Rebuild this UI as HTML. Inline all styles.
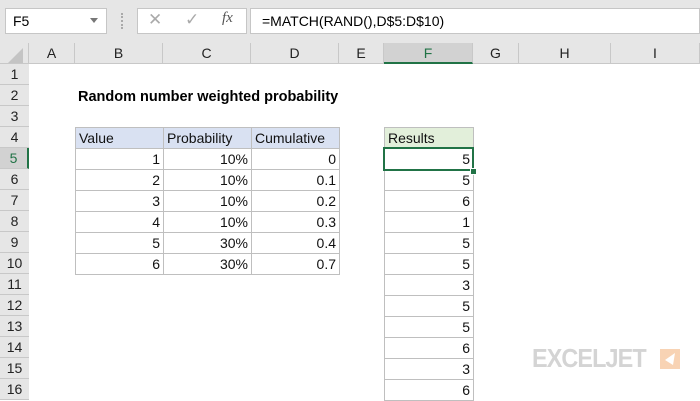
<!DOCTYPE html>
<html><head><style>
body{margin:0;width:700px;height:400px;overflow:hidden;background:#fff;font-family:"Liberation Sans",sans-serif;position:relative}
.a{position:absolute;box-sizing:border-box}
.ch{position:absolute;top:43px;height:21px;border-right:1px solid #c8c8c8;text-align:center;font-size:14px;line-height:21px;color:#222;box-sizing:border-box}
.rh{position:absolute;left:0;width:29px;height:21px;border-bottom:1px solid #c8c8c8;text-align:center;font-size:14px;line-height:21px;color:#222;box-sizing:border-box;background:#e6e6e6}
.c{position:absolute;height:22px;font-size:14px;line-height:21px;padding:0 3px;box-sizing:border-box;border:1px solid #bfbfbf;color:#111}
.r{text-align:right}
</style></head><body>
<div class="a" style="left:0;top:0;width:700px;height:43px;background:#e6e6e6"></div>
<div class="a" style="left:5px;top:8px;width:102px;height:26px;background:#fff;border:1px solid #c6c6c6;font-size:14px;line-height:24px;padding-left:7px">F5</div>
<div class="a" style="left:90px;top:18px;width:0;height:0;border-left:4px solid transparent;border-right:4px solid transparent;border-top:5px solid #777"></div>
<div class="a" style="left:121px;top:13px;width:2px;height:16px;border-left:2px dotted #aaa"></div>
<div class="a" style="left:137px;top:8px;width:110px;height:26px;background:#fff;border:1px solid #c6c6c6"></div>
<div class="a" style="left:148px;top:10px;font-size:17px;color:#aaa">✕</div>
<div class="a" style="left:185px;top:10px;font-size:17px;color:#aaa">✓</div>
<div class="a" style="left:222px;top:10px;font-size:15px;color:#555;font-style:italic;font-family:'Liberation Serif',serif">fx</div>
<div class="a" style="left:250px;top:8px;width:450px;height:26px;background:#fff;border:1px solid #c6c6c6;font-size:14px;line-height:24px;padding-left:11px">=MATCH(RAND(),D$5:D$10)</div>
<div class="a" style="left:0;top:43px;width:700px;height:21px;background:#e6e6e6;border-bottom:1px solid #c8c8c8"></div>
<div class="a" style="left:8px;top:48px;width:0;height:0;border-left:15px solid transparent;border-bottom:15px solid #c4c4c4"></div>
<div class="ch" style="left:0;width:29px"></div>
<div class="ch" style="left:29px;width:46px">A</div>
<div class="ch" style="left:75px;width:88px">B</div>
<div class="ch" style="left:163px;width:88px">C</div>
<div class="ch" style="left:251px;width:88px">D</div>
<div class="ch" style="left:339px;width:45px">E</div>
<div class="ch" style="left:384px;width:89px;background:#d2d2d2;border-bottom:2px solid #217346;color:#217346">F</div>
<div class="ch" style="left:473px;width:46px">G</div>
<div class="ch" style="left:519px;width:92px">H</div>
<div class="ch" style="left:611px;width:89px">I</div>
<div class="a" style="left:28px;top:64px;width:1px;height:336px;background:#c8c8c8"></div>
<div class="rh" style="top:64px">1</div><div class="rh" style="top:85px">2</div><div class="rh" style="top:106px">3</div><div class="rh" style="top:127px">4</div>
<div class="rh" style="top:148px;background:#d2d2d2;color:#217346;border-right:2px solid #217346">5</div>
<div class="rh" style="top:169px">6</div><div class="rh" style="top:190px">7</div><div class="rh" style="top:211px">8</div><div class="rh" style="top:232px">9</div><div class="rh" style="top:253px">10</div><div class="rh" style="top:274px">11</div><div class="rh" style="top:295px">12</div><div class="rh" style="top:316px">13</div><div class="rh" style="top:337px">14</div><div class="rh" style="top:358px">15</div><div class="rh" style="top:379px">16</div>
<div class="a" style="left:78px;top:87px;font-size:14.5px;font-weight:bold;line-height:21px">Random number weighted probability</div>

<div class="c" style="left:75px;top:127px;width:89px;background:#d9e1f2">Value</div>
<div class="c" style="left:163px;top:127px;width:89px;background:#d9e1f2">Probability</div>
<div class="c" style="left:251px;top:127px;width:89px;background:#d9e1f2">Cumulative</div>

<div class="c r" style="left:75px;top:148px;width:89px">1</div><div class="c r" style="left:163px;top:148px;width:89px">10%</div><div class="c r" style="left:251px;top:148px;width:89px">0</div>
<div class="c r" style="left:75px;top:169px;width:89px">2</div><div class="c r" style="left:163px;top:169px;width:89px">10%</div><div class="c r" style="left:251px;top:169px;width:89px">0.1</div>
<div class="c r" style="left:75px;top:190px;width:89px">3</div><div class="c r" style="left:163px;top:190px;width:89px">10%</div><div class="c r" style="left:251px;top:190px;width:89px">0.2</div>
<div class="c r" style="left:75px;top:211px;width:89px">4</div><div class="c r" style="left:163px;top:211px;width:89px">10%</div><div class="c r" style="left:251px;top:211px;width:89px">0.3</div>
<div class="c r" style="left:75px;top:232px;width:89px">5</div><div class="c r" style="left:163px;top:232px;width:89px">30%</div><div class="c r" style="left:251px;top:232px;width:89px">0.4</div>
<div class="c r" style="left:75px;top:253px;width:89px">6</div><div class="c r" style="left:163px;top:253px;width:89px">30%</div><div class="c r" style="left:251px;top:253px;width:89px">0.7</div>

<div class="c" style="left:384px;top:127px;width:90px;background:#e2efda">Results</div>
<div class="c r" style="left:384px;top:169px;width:90px">5</div>
<div class="c r" style="left:384px;top:190px;width:90px">6</div>
<div class="c r" style="left:384px;top:211px;width:90px">1</div>
<div class="c r" style="left:384px;top:232px;width:90px">5</div>
<div class="c r" style="left:384px;top:253px;width:90px">5</div>
<div class="c r" style="left:384px;top:274px;width:90px">3</div>
<div class="c r" style="left:384px;top:295px;width:90px">5</div>
<div class="c r" style="left:384px;top:316px;width:90px">5</div>
<div class="c r" style="left:384px;top:337px;width:90px">6</div>
<div class="c r" style="left:384px;top:358px;width:90px">3</div>
<div class="c r" style="left:384px;top:379px;width:90px">6</div>
<div class="c r" style="left:383px;top:147px;width:91px;height:24px;border:2px solid #217346;line-height:20px;padding-right:2px">5</div>
<div class="a" style="left:470px;top:168px;width:5px;height:5px;background:#217346;border:1px solid #fff;box-sizing:content-box"></div>

<div class="a" style="left:532px;top:344px;font-size:26px;font-weight:bold;color:#d4d4d4;letter-spacing:-1px;line-height:28px;transform:scaleX(0.9);transform-origin:0 0">EXCELJET</div>
<div class="a" style="left:660px;top:349px;width:20px;height:20px;background:#f8d3b4"></div>
<svg class="a" style="left:660px;top:349px" width="20" height="20"><path d="M15 4 L5 11 L13 16 Z" fill="#fff"/></svg>
</body></html>
